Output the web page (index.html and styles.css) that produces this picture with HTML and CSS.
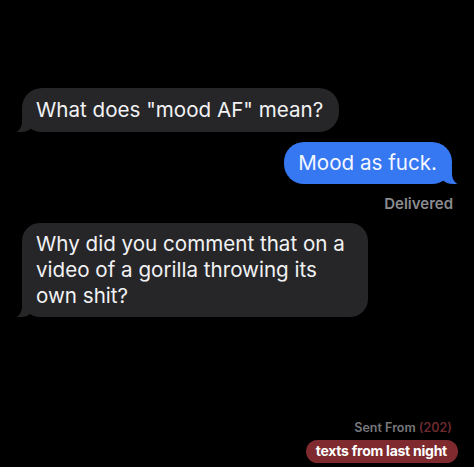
FILE: index.html
```html
<!DOCTYPE html>
<html>
<head>
<meta charset="utf-8">
<link rel="stylesheet" href="styles.css">
</head>
<body>
<div class="thread">
  <div class="bubble in first">What does "mood AF" mean?</div>
  <div class="bubble out">Mood as fuck.</div>
  <div class="status">Delivered</div>
  <div class="bubble in second">Why did you comment that on a video of a gorilla throwing its own shit?</div>
  <div class="credit">Sent From <span class="num">(202)</span></div>
  <div class="brand">texts from last night</div>
</div>
</body>
</html>
```

FILE: styles.css
```css
html, body {
  margin: 0;
  padding: 0;
  background: #000;
}
.thread {
  width: 474px;
  height: 467px;
  box-sizing: border-box;
  padding: 88px 14px 0 22px;
  display: flex;
  flex-direction: column;
  font-family: Inter, "Liberation Sans", Arial, sans-serif;
  overflow: hidden;
}
.bubble {
  position: relative;
  font-size: 20.6px;
  line-height: 26px;
  color: #f2f2f4;
  border-radius: 20px;
}
.bubble.in {
  align-self: flex-start;
  background: #262629;
}
.bubble.first {
  padding: 9px 16px 9px 14px;
}
.bubble.second {
  width: 346px;
  box-sizing: border-box;
  padding: 8px 12px 8px 14px;
  margin-top: 11px;
  border-radius: 18px;
}
.bubble.in::before {
  content: "";
  position: absolute;
  left: -7px;
  bottom: 0;
  width: 20px;
  height: 18px;
  background: #262629;
  border-bottom-right-radius: 14px 12px;
}
.bubble.in::after {
  content: "";
  position: absolute;
  left: -14px;
  bottom: -2px;
  width: 14px;
  height: 20px;
  background: #000;
  border-bottom-right-radius: 12px 12px;
}
.bubble.out {
  align-self: flex-end;
  margin-top: 10px;
  margin-right: 8px;
  padding: 8px 15px 8px 14px;
  background: #3677f2;
  color: #f4f7ff;
}
.bubble.out::before {
  content: "";
  position: absolute;
  right: -7px;
  bottom: 0;
  width: 20px;
  height: 18px;
  background: #3677f2;
  border-bottom-left-radius: 14px 12px;
}
.bubble.out::after {
  content: "";
  position: absolute;
  right: -14px;
  bottom: -2px;
  width: 14px;
  height: 20px;
  background: #000;
  border-bottom-left-radius: 12px 12px;
}
.status {
  align-self: flex-end;
  margin-top: 12px;
  margin-right: 7px;
  font-size: 15px;
  font-weight: 600;
  line-height: 16px;
  color: #8b8b90;
}
.credit {
  align-self: flex-end;
  margin-top: auto;
  margin-right: 8px;
  font-size: 12.5px;
  font-weight: 600;
  line-height: 14px;
  color: #77777c;
}
.credit .num {
  color: #6d2a2e;
}
.brand {
  position: relative;
  align-self: flex-end;
  margin-top: 5px;
  margin-bottom: 4px;
  margin-right: 2px;
  padding: 3px 11px 4px 10px;
  border-radius: 12px;
  background: #7e2a2f;
  color: #fff;
  font-size: 14px;
  font-weight: 700;
  line-height: 16px;
  letter-spacing: -0.25px;
}
.brand::after {
  content: "";
  position: absolute;
  right: -4px;
  bottom: 0;
  width: 10px;
  height: 10px;
  background: #7e2a2f;
  border-bottom-left-radius: 8px 8px;
  z-index: -1;
}
```
